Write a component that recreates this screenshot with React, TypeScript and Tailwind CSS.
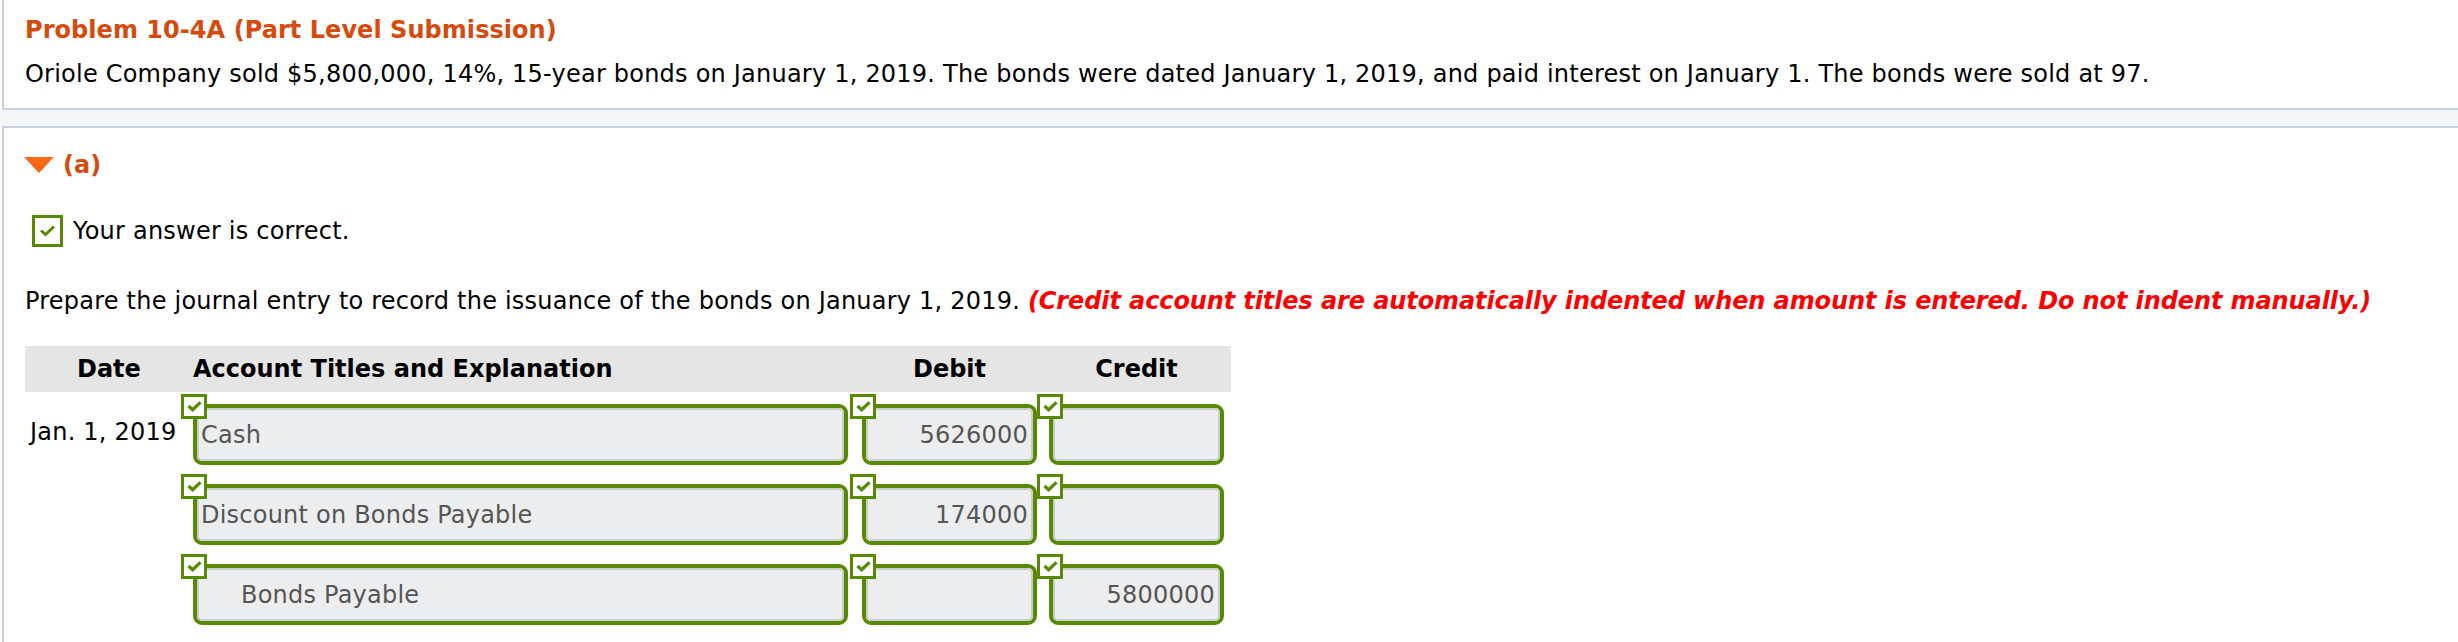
import React from 'react';

/**
 * Journal entry problem page: bond issuance, part (a) answered correctly.
 */

type Line = {
  date: string;
  account: string;
  debit: string;
  credit: string;
  indent?: boolean;
};

const LINES: Line[] = [
  { date: 'Jan. 1, 2019', account: 'Cash', debit: '5626000', credit: '' },
  { date: '', account: 'Discount on Bonds Payable', debit: '174000', credit: '' },
  { date: '', account: 'Bonds Payable', debit: '', credit: '5800000', indent: true },
];

function Check({ className, weight = 3.4 }: { className?: string; weight?: number }) {
  return (
    <svg viewBox="0 0 16 12" className={className} fill="none" stroke="currentColor" strokeWidth={weight}>
      <path d="M1.5 5.5 L6 9.5 L14.5 1.5" />
    </svg>
  );
}

function TickBox() {
  return (
    <span className="absolute -left-[16px] -top-[14px] z-10 flex h-[25px] w-[26px] items-center justify-center border-[3px] border-[#578a00] bg-white text-[#578a00]">
      <Check className="h-[11px] w-[15px]" weight={3.6} />
    </span>
  );
}

function Field({ text, className, right, indent }: { text: string; className: string; right?: boolean; indent?: boolean }) {
  return (
    <div className={`relative h-[61px] rounded-[9px] border-4 border-[#578a00] ${className}`}>
      <TickBox />
      <div
        className={`flex h-full items-center rounded-[5px] bg-[#ecedef] shadow-[inset_0_0_0_2px_#cbcccf] text-[#555] ${
          right ? 'justify-end pr-[5px]' : indent ? 'pl-[44px]' : 'pl-[4px]'
        }`}
      >
        {text}
      </div>
    </div>
  );
}

export default function App() {
  return (
    <div
      className="h-[642px] w-[2458px] overflow-hidden bg-white text-[24px] tracking-[0.22px] text-black"
      style={{ fontFamily: '"DejaVu Sans", Verdana, sans-serif' }}
    >
      {/* Problem statement */}
      <div className="ml-[2px] border-b-2 border-l-2 border-[#c9d3df] pb-[19px] pl-[21px] pt-[16px]">
        <h1 className="text-[24px] font-bold leading-[29px] tracking-[0.05px] text-[#d74a0d]">
          Problem 10-4A (Part Level Submission)
        </h1>
        <p className="mt-[15px] leading-[29px]">
          Oriole Company sold $5,800,000, 14%, 15-year bonds on January 1, 2019. The bonds were dated January 1, 2019, and paid interest on January 1. The bonds were sold at 97.
        </p>
      </div>

      <div className="h-[16px] bg-[#f4f7fa]" />

      {/* Part (a) */}
      <div className="ml-[2px] h-[600px] border-l-2 border-t-2 border-[#c9d3df] pl-[21px]">
        <div className="mt-[22px] flex h-[30px] items-center">
          <svg viewBox="0 0 30 16" className="-ml-[1px] h-[16px] w-[30px]">
            <defs>
              <linearGradient id="tri" x1="0" y1="0" x2="0" y2="1">
                <stop offset="0" stopColor="#ff6a1a" />
                <stop offset="1" stopColor="#f0600a" />
              </linearGradient>
            </defs>
            <polygon points="0,0 30,0 15,16" fill="url(#tri)" />
          </svg>
          <span className="ml-[9px] font-bold tracking-normal text-[#d74a0d]">(a)</span>
        </div>

        <div className="mt-[35px] flex h-[32px] items-center">
          <span className="ml-[7px] flex h-[32px] w-[31px] items-center justify-center border-[3px] border-[#578a00] bg-white text-[#578a00]">
            <Check className="h-[12px] w-[17px]" weight={3} />
          </span>
          <span className="ml-[10px]">Your answer is correct.</span>
        </div>

        <p className="mt-[39px] leading-[30px]">
          Prepare the journal entry to record the issuance of the bonds on January 1, 2019.{' '}
          <span className="font-bold italic tracking-[-0.1px] text-[#ff0000]">
            (Credit account titles are automatically indented when amount is entered. Do not indent manually.)
          </span>
        </p>

        <div className="w-[1206px]">
          <div className="mt-[30px] flex h-[46px] items-center bg-[#e5e5e5] font-bold tracking-normal">
            <div className="w-[168px] pl-[52px]">Date</div>
            <div className="w-[655px]">Account Titles and Explanation</div>
            <div className="ml-[14px] w-[175px] text-center">Debit</div>
            <div className="ml-[12px] w-[175px] text-center">Credit</div>
          </div>

          <div className="mt-[12px] flex flex-col gap-[19px]">
            {LINES.map((line, i) => (
              <div key={i} className="flex items-center">
                <div className="-mt-[6px] w-[168px] pl-[5px]">{line.date}</div>
                <Field text={line.account} indent={line.indent} className="w-[655px]" />
                <Field text={line.debit} right className="ml-[14px] w-[175px]" />
                <Field text={line.credit} right className="ml-[12px] w-[175px]" />
              </div>
            ))}
          </div>
        </div>
      </div>
    </div>
  );
}
